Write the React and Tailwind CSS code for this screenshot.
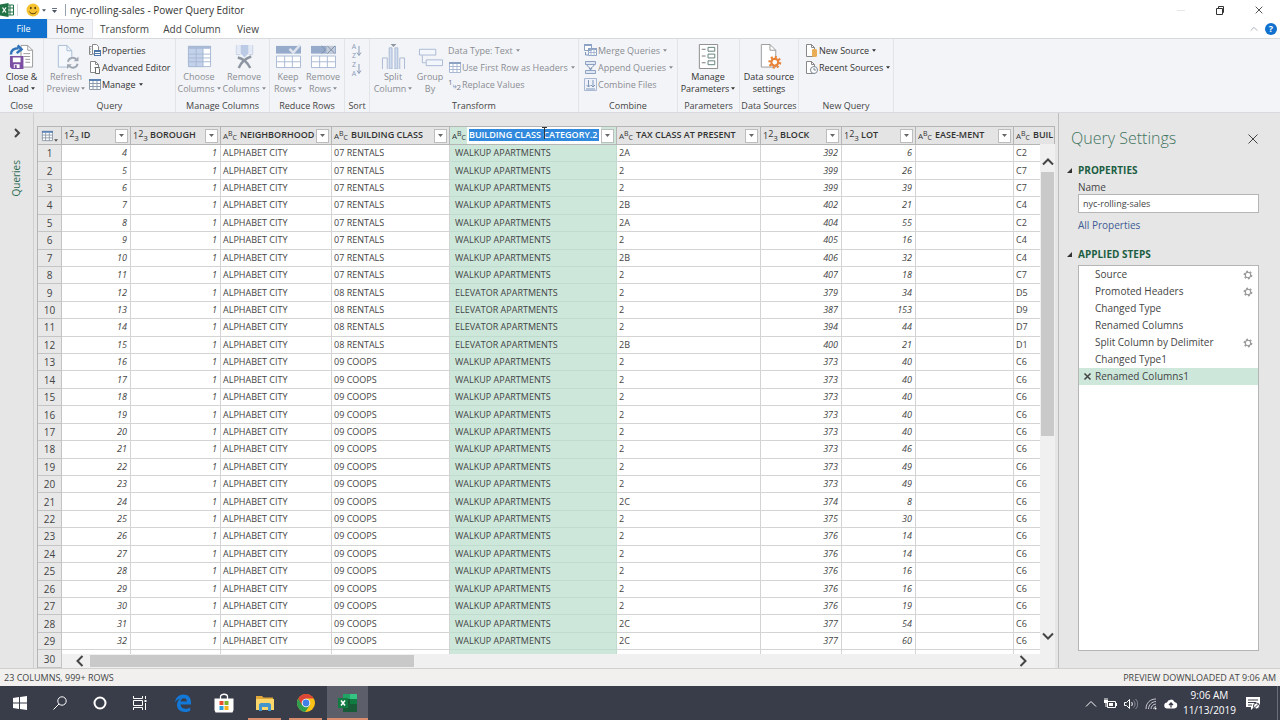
import { useState } from 'react';

const COLUMNS = [
  { name: 'ID', type: 'number', width: 'w-[69px]' },
  { name: 'BOROUGH', type: 'number', width: 'w-[90px]' },
  { name: 'NEIGHBORHOOD', type: 'text', width: 'w-[111px]' },
  { name: 'BUILDING CLASS', type: 'text', width: 'w-[118px]' },
  { name: 'BUILDING CLASS CATEGORY.2', type: 'text', width: 'w-[167px]', selected: true },
  { name: 'TAX CLASS AT PRESENT', type: 'text', width: 'w-[144px]' },
  { name: 'BLOCK', type: 'number', width: 'w-[81px]' },
  { name: 'LOT', type: 'number', width: 'w-[74px]' },
  { name: 'EASE-MENT', type: 'text', width: 'w-[98px]' },
  { name: 'BUIL', type: 'text', width: '', last: true },
];

// class, category, tax class, block, lot, building class at present
const SALES = [
  ['07 RENTALS', 'WALKUP APARTMENTS', '2A', 392, 6, 'C2'],
  ['07 RENTALS', 'WALKUP APARTMENTS', '2', 399, 26, 'C7'],
  ['07 RENTALS', 'WALKUP APARTMENTS', '2', 399, 39, 'C7'],
  ['07 RENTALS', 'WALKUP APARTMENTS', '2B', 402, 21, 'C4'],
  ['07 RENTALS', 'WALKUP APARTMENTS', '2A', 404, 55, 'C2'],
  ['07 RENTALS', 'WALKUP APARTMENTS', '2', 405, 16, 'C4'],
  ['07 RENTALS', 'WALKUP APARTMENTS', '2B', 406, 32, 'C4'],
  ['07 RENTALS', 'WALKUP APARTMENTS', '2', 407, 18, 'C7'],
  ['08 RENTALS', 'ELEVATOR APARTMENTS', '2', 379, 34, 'D5'],
  ['08 RENTALS', 'ELEVATOR APARTMENTS', '2', 387, 153, 'D9'],
  ['08 RENTALS', 'ELEVATOR APARTMENTS', '2', 394, 44, 'D7'],
  ['08 RENTALS', 'ELEVATOR APARTMENTS', '2B', 400, 21, 'D1'],
  ['09 COOPS', 'WALKUP APARTMENTS', '2', 373, 40, 'C6'],
  ['09 COOPS', 'WALKUP APARTMENTS', '2', 373, 40, 'C6'],
  ['09 COOPS', 'WALKUP APARTMENTS', '2', 373, 40, 'C6'],
  ['09 COOPS', 'WALKUP APARTMENTS', '2', 373, 40, 'C6'],
  ['09 COOPS', 'WALKUP APARTMENTS', '2', 373, 40, 'C6'],
  ['09 COOPS', 'WALKUP APARTMENTS', '2', 373, 46, 'C6'],
  ['09 COOPS', 'WALKUP APARTMENTS', '2', 373, 49, 'C6'],
  ['09 COOPS', 'WALKUP APARTMENTS', '2', 373, 49, 'C6'],
  ['09 COOPS', 'WALKUP APARTMENTS', '2C', 374, 8, 'C6'],
  ['09 COOPS', 'WALKUP APARTMENTS', '2', 375, 30, 'C6'],
  ['09 COOPS', 'WALKUP APARTMENTS', '2', 376, 14, 'C6'],
  ['09 COOPS', 'WALKUP APARTMENTS', '2', 376, 14, 'C6'],
  ['09 COOPS', 'WALKUP APARTMENTS', '2', 376, 16, 'C6'],
  ['09 COOPS', 'WALKUP APARTMENTS', '2', 376, 16, 'C6'],
  ['09 COOPS', 'WALKUP APARTMENTS', '2', 376, 19, 'C6'],
  ['09 COOPS', 'WALKUP APARTMENTS', '2C', 377, 54, 'C6'],
  ['09 COOPS', 'WALKUP APARTMENTS', '2C', 377, 60, 'C6'],
];

const ROWS = SALES.map(([cls, category, tax, block, lot, present], i) => [
  i + 4, 1, 'ALPHABET CITY', cls, category, tax, block, lot, '', present,
]);

const STEPS = [
  { name: 'Source', gear: true },
  { name: 'Promoted Headers', gear: true },
  { name: 'Changed Type' },
  { name: 'Renamed Columns' },
  { name: 'Split Column by Delimiter', gear: true },
  { name: 'Changed Type1' },
  { name: 'Renamed Columns1' },
];

/* ---------- icons ---------- */

function Caret({ size = 'h-[3px] w-1', className = '' }) {
  return (
    <svg viewBox="0 0 5 3" className={`inline-block shrink-0 ${size} ${className}`} fill="currentColor">
      <path d="M0 0h5L2.500 3z" />
    </svg>
  );
}

function Icon({ className = 'h-[25px] w-[25px]', box = '0 0 26 26', children }) {
  return (
    <svg viewBox={box} className={`shrink-0 ${className}`} fill="none" aria-hidden="true">
      {children}
    </svg>
  );
}

const SMALL = 'h-[13px] w-[13px]';

function CloseLoadIcon() {
  return (
    <Icon>
      <path d="M12.500 1.500h7l5 5V24h-12z" fill="#fff" stroke="#9a9a9a" />
      <path d="M19.500 1.500v5h5M15 10h7M15 13h7M17 16h5M17 19h5" stroke="#9a9a9a" />
      <path d="M2 11C2 6.500 5 4.500 10 4.500M9 1.500l4 4-5 4" stroke="#2f72b8" strokeWidth="2.600" />
      <path d="M1 12.500h14V26H3l-2-2z" fill="#7b4fa3" />
      <path d="M4 14h8v5H4zM5 21h6v4H5z" fill="#fff" />
      <path d="M6 22h2v3H6z" fill="#7b4fa3" />
    </Icon>
  );
}

function RefreshIcon() {
  return (
    <Icon>
      <path d="M4.500 1.500h9l5 5.500v17h-14z" fill="#f4f7fb" stroke="#a9bdd6" />
      <path d="M13.500 1.500V7h5" stroke="#a9bdd6" />
      <circle cx="19.500" cy="19.500" r="6.500" fill="#f3f4f8" />
      <path d="M14.500 18.500a5 5 0 0 1 9-2M24.500 20.500a5 5 0 0 1-9 2" stroke="#a0a8b4" strokeWidth="2" />
      <path d="M25.500 13v5h-5zM13.500 26v-5h5z" fill="#a0a8b4" />
    </Icon>
  );
}

function ChooseColumnsIcon() {
  return (
    <Icon>
      <path d="M1 2h24v22H1z" fill="#fff" />
      <path d="M1 2h16v22H1z" fill="#c3d2ea" />
      <path d="M1 2h24v3H1z" fill="#a9bad6" />
      <path d="M1.500 2.500h23v21h-23zM9.500 5v19M16.500 5v19M1 10.500h24M1 14.500h24M1 18.500h24" stroke="#a9b9d4" />
    </Icon>
  );
}

function RemoveColumnsIcon() {
  return (
    <Icon>
      <path d="M4.500 1v10h4M21.500 1v10h-4" stroke="#c3cfe2" />
      <path d="M5 1h4v9H5zM17 1h4v9h-4z" fill="#e3eaf5" />
      <path d="M9 1h8v9l-4 4-4-4z" fill="#bccbe5" />
      <path d="M6 14c5 1 10 5 13 11M20 13C14 15 9 20 7 25" stroke="#8d95a1" strokeWidth="2.500" />
    </Icon>
  );
}

function RowsIcon({ remove }) {
  return (
    <Icon>
      <path d="M0 2h26v8H0z" fill="#96abcb" />
      <path d="M.500 12.500h25v12H.500z" fill="#fff" stroke="#a9b9d4" />
      <path d="M9 12.500v12M17 12.500v12M.500 18.500h25" stroke="#a9b9d4" />
      {remove ? (
        <g>
          <path d="M16 2h9v8h-9z" fill="#c2cbd9" />
          <path d="M17 2l8 8M25 2l-8 8M11 2l4 4-4 4" stroke="#7f8ea6" />
        </g>
      ) : (
        <path d="M14 5l4 4 7-8" stroke="#dfe4ec" strokeWidth="2.500" />
      )}
    </Icon>
  );
}

// two stacked letters with a down arrow
function SortButton({ top, bottom, label }) {
  return (
    <button type="button" aria-label={label} className="flex h-[18px] items-center text-[#8b9bb5]">
      <span className="flex flex-col text-[7px] leading-[9px]">
        <span>{top}</span>
        <span>{bottom}</span>
      </span>
      <Icon box="0 0 6 12" className="h-3 w-[6px]">
        <path d="M3 1v9M1 7.500l2 3 2-3" stroke="currentColor" />
      </Icon>
    </button>
  );
}

function SplitColumnIcon() {
  return (
    <Icon>
      <path d="M1.500 26V14.500h5V26M19.500 26V14.500h5V26" stroke="#a9b9d4" />
      <path d="M8.500 4v22h3V4zM14.500 4v22h3V4z" fill="#d2def0" stroke="#a9b9d4" />
      <path d="M10 0h6l-3 3z" fill="#8d95a1" />
    </Icon>
  );
}

function GroupByIcon() {
  return (
    <Icon>
      <path d="M1.500 5.500h17v6h-17zM8.500 16.500h17v6h-17z" fill="#f3f6fa" stroke="#a9b9d4" />
      <path d="M4.500 12v7.500H8" stroke="#a9b9d4" />
    </Icon>
  );
}

function ParametersIcon() {
  return (
    <Icon>
      <path d="M3.500.500h19v25h-19z" fill="#fff" stroke="#8b8b8b" />
      <path d="M12.500 3.500h7v4h-7zM12.500 10.500h7v4h-7zM12.500 17.500h7v4h-7z" stroke="#5f7f78" />
      <path d="M6 5.500h4M6 12.500h4M6 19.500h4" stroke="#777" />
    </Icon>
  );
}

function Gear({ cx, cy, r, color, hole, dash, width }) {
  return (
    <g>
      <circle cx={cx} cy={cy} r={r} stroke={color} strokeWidth={width} />
      <circle cx={cx} cy={cy} r={r + width * 0.8} stroke={color} strokeWidth={width} strokeDasharray={dash} pathLength="24" />
      <circle cx={cx} cy={cy} r={r - width / 2} fill={hole} />
    </g>
  );
}

function DataSourceIcon() {
  return (
    <Icon>
      <path d="M4.500.500h9l6 6V24h-15z" fill="#fff" stroke="#9a9a9a" />
      <path d="M13.500.500v6h6" stroke="#9a9a9a" />
      <Gear cx={18.500} cy={19} r={3.5} width={2.5} color="#e8833a" hole="#fff" dash="1.500 1.500" />
    </Icon>
  );
}

function PropertiesIcon() {
  return (
    <Icon box="0 0 13 13" className={SMALL}>
      <path d="M1.500 2.500v8h3M1.500 2.500h2M4.500.500h4l2 2V10h-6z" fill="#fff" stroke="#888" />
      <path d="M2 5h1M2 8h1" stroke="#888" />
      <path d="M6 6h7v6H6z" fill="#4f76a8" />
      <path d="M7 8.500h5M7 10.500h5" stroke="#fff" />
    </Icon>
  );
}

function AdvancedEditorIcon() {
  return (
    <Icon box="0 0 13 13" className={SMALL}>
      <path d="M2.500.500h5l3 3v8h-8z" fill="#fff" stroke="#888" />
      <path d="M7.500.500v3h3" stroke="#888" />
      <path d="M6.500 6.500h5v1M7.500 7v5.500h4V8" fill="#fff" stroke="#6b6b6b" />
    </Icon>
  );
}

function TableIcon({ className = SMALL, line = '#8e9bab', head = '#5b82b5' }) {
  return (
    <Icon box="0 0 13 13" className={className}>
      <path d="M1.500 1.500h11v10h-11z" fill="#fff" stroke={line} />
      <path d="M1 5.500h12M1 8.500h12M5 3v9M9 3v9" stroke={line} />
      <path d="M1 1h12v2H1z" fill={head} />
    </Icon>
  );
}

function ReplaceIcon() {
  return (
    <span aria-hidden="true" className="flex h-[13px] w-[13px] shrink-0 items-start text-[8px] leading-[8px] text-[#737c8c]">
      <span>1</span>
      <Icon box="0 0 5 8" className="mt-1 h-2 w-[4px]">
        <path d="M0 2v3h4M2.500 3l1.500 2-1.500 2" stroke="#7f96bb" />
      </Icon>
      <span className="mt-[5px]">2</span>
    </span>
  );
}

function MergeIcon() {
  return (
    <Icon box="0 0 13 13" className={SMALL}>
      <path d="M.500.500h7v6h-7zM4.500 4.500h8v7h-8z" fill="#fff" stroke="#8ea3c4" />
      <path d="M0 0h8v2H0zM4 4h9v2H4z" fill="#8ea3c4" />
      <path d="M4 8.500h9M7 5v7M10 5v7" stroke="#a9b9d4" />
      <path d="M1.500 8v3H4" stroke="#7f96bb" />
    </Icon>
  );
}

function AppendIcon() {
  return (
    <Icon box="0 0 13 13" className={SMALL}>
      <path d="M1.500.500h10v3h-10zM1.500 9.500h10v3h-10z" fill="#dfe7f3" stroke="#8ea3c4" />
      <path d="M3 4c0 2 3 1.500 3.500 4.500C7 5.500 10 6 10 4M5 7l1.500 2L8 7" stroke="#7f96bb" />
    </Icon>
  );
}

function CombineIcon() {
  return (
    <Icon box="0 0 13 13" className={SMALL}>
      <path d="M.500.500h12v12H.500z" fill="#eef2f8" stroke="#a9b9d4" />
      <path d="M4.500 2v7M2.500 7l2 2 2-2M9 2v7M7 7l2 2 2-2M2 11h9" stroke="#7f96bb" />
    </Icon>
  );
}

function SourceIcon({ recent }) {
  return (
    <Icon box="0 0 13 13" className={SMALL}>
      <path d="M1.500.500h5l3 3v9h-8z" fill="#fff" stroke="#888" />
      <path d="M6.500.500v3h3" stroke="#888" />
      {recent ? (
        <g>
          <circle cx="9" cy="9" r="3.500" fill="#fff" stroke="#7a8794" />
          <path d="M9 7v2h2" stroke="#7a8794" />
        </g>
      ) : (
        <path d="M7 6c0-1.300 5-1.300 5 0v6c0 1.300-5 1.300-5 0z" fill="#e9ae55" />
      )}
    </Icon>
  );
}

function TypeIcon({ type }) {
  const [a, b, c] = type === 'number' ? ['1', '2', '3'] : ['A', 'B', 'C'];
  const size = type === 'number' ? 'text-[9px]' : 'text-[8px]';
  return (
    <span aria-hidden="true" className={`flex h-[15px] w-[14px] shrink-0 items-start leading-[9px] font-normal text-[#333] ${size}`}>
      <span className="mt-[3px]">{a}</span>
      <span className={type === 'number' ? 'mt-px' : 'mt-px text-[7px]'}>{b}</span>
      <span className={type === 'number' ? 'mt-[5px] text-[8px]' : 'mt-[5px] text-[7px]'}>{c}</span>
    </span>
  );
}

function Chevron({ d, className = 'h-3 w-3', width = 2 }) {
  return (
    <Icon box="0 0 12 12" className={className}>
      <path d={d} stroke="currentColor" strokeWidth={width} />
    </Icon>
  );
}

/* ---------- ribbon ---------- */

function BigButton({ icon, top, bottom, caret, disabled, className }) {
  return (
    <button
      type="button"
      className={`flex shrink-0 flex-col items-center pt-[2px] ${className} ${disabled ? 'text-[#8a8d93]' : 'text-[#333]'}`}
    >
      {icon}
      <span className="mt-[2px] leading-[12px] whitespace-nowrap">{top}</span>
      <span className="flex items-center gap-[2px] leading-[11px] whitespace-nowrap">
        {bottom}
        {caret && <Caret />}
      </span>
    </button>
  );
}

function SmallButton({ icon, label, caret, disabled }) {
  return (
    <button
      type="button"
      className={`flex h-[17px] items-center gap-px whitespace-nowrap ${disabled ? 'text-[#8a8d93]' : 'text-[#333]'}`}
    >
      {icon}
      <span>{label}</span>
      {caret && <Caret className="ml-[2px]" />}
    </button>
  );
}

function Group({ label, className, children }) {
  return (
    <section className={`flex shrink-0 flex-col border-r border-[#e2e4e8] ${className}`}>
      <div className="flex flex-1 pt-[3px]">{children}</div>
      <h2 className="text-center leading-[12px] whitespace-nowrap text-[#444]">{label}</h2>
    </section>
  );
}

function Ribbon() {
  return (
    <div className="flex h-[75px] shrink-0 border-y border-[#d9dadd] bg-[#f3f4f8] text-[9px]">
      <Group label="Close" className="w-[44px]">
        <BigButton icon={<CloseLoadIcon />} top="Close &" bottom="Load" caret className="w-[43px]" />
      </Group>
      <Group label="Query" className="w-[132px]">
        <BigButton icon={<RefreshIcon />} top="Refresh" bottom="Preview" caret disabled className="w-[44px]" />
        <div className="flex flex-col">
          <SmallButton icon={<PropertiesIcon />} label="Properties" />
          <SmallButton icon={<AdvancedEditorIcon />} label="Advanced Editor" />
          <SmallButton icon={<TableIcon />} label="Manage" caret />
        </div>
      </Group>
      <Group label="Manage Columns" className="w-[94px]">
        <BigButton icon={<ChooseColumnsIcon />} top="Choose" bottom="Columns" caret disabled className="w-[46px]" />
        <BigButton icon={<RemoveColumnsIcon />} top="Remove" bottom="Columns" caret disabled className="w-[44px]" />
      </Group>
      <Group label="Reduce Rows" className="w-[75px]">
        <BigButton icon={<RowsIcon />} top="Keep" bottom="Rows" caret disabled className="w-[36px]" />
        <BigButton icon={<RowsIcon remove />} top="Remove" bottom="Rows" caret disabled className="w-[34px]" />
      </Group>
      <Group label="Sort" className="w-[25px]">
        <div className="flex w-full flex-col items-center">
          <SortButton top="A" bottom="Z" label="Sort ascending" />
          <SortButton top="Z" bottom="A" label="Sort descending" />
        </div>
      </Group>
      <Group label="Transform" className="w-[209px]">
        <BigButton icon={<SplitColumnIcon />} top="Split" bottom="Column" caret disabled className="w-[46px]" />
        <BigButton icon={<GroupByIcon />} top="Group" bottom="By" disabled className="w-[28px]" />
        <div className="flex flex-col pl-1">
          <SmallButton label="Data Type: Text" caret disabled />
          <SmallButton icon={<TableIcon line="#a9b9d4" head="#8ea3c4" />} label="Use First Row as Headers" caret disabled />
          <SmallButton icon={<ReplaceIcon />} label="Replace Values" disabled />
        </div>
      </Group>
      <Group label="Combine" className="w-[99px]">
        <div className="flex flex-col pl-[5px]">
          <SmallButton icon={<MergeIcon />} label="Merge Queries" caret disabled />
          <SmallButton icon={<AppendIcon />} label="Append Queries" caret disabled />
          <SmallButton icon={<CombineIcon />} label="Combine Files" disabled />
        </div>
      </Group>
      <Group label="Parameters" className="w-[62px]">
        <BigButton icon={<ParametersIcon />} top="Manage" bottom="Parameters" caret className="w-[60px]" />
      </Group>
      <Group label="Data Sources" className="w-[59px]">
        <BigButton icon={<DataSourceIcon />} top="Data source" bottom="settings" className="w-[58px]" />
      </Group>
      <Group label="New Query" className="w-[95px]">
        <div className="flex flex-col pl-[6px]">
          <SmallButton icon={<SourceIcon />} label="New Source" caret />
          <SmallButton icon={<SourceIcon recent />} label="Recent Sources" caret />
        </div>
      </Group>
    </div>
  );
}

/* ---------- window chrome ---------- */

function ExcelLogo() {
  return (
    <Icon box="0 0 14 14" className="h-[14px] w-[14px]">
      <path d="M7 2h6.500v10H7z" fill="#fff" stroke="#217346" />
      <path d="M10 2v10M8 5h5M8 9h5" stroke="#217346" />
      <path d="M0 1.500L8.500 0v14L0 12.500z" fill="#217346" />
      <path d="M2.500 4.500l3.500 5M6 4.500l-3.500 5" stroke="#fff" strokeWidth="1.300" />
    </Icon>
  );
}

function TitleBar() {
  return (
    <header className="flex h-[19px] shrink-0 items-center bg-white pt-px text-[10px] text-[#333]">
      <ExcelLogo />
      <span className="ml-[3px] h-3 w-px bg-gray-300" />
      <button type="button" aria-label="Feedback" className="ml-2 flex items-center gap-[2px]">
        <Icon box="0 0 14 14" className="h-[14px] w-[14px]">
          <circle cx="7" cy="7" r="6.500" fill="#f7c331" />
          <ellipse cx="4.800" cy="5" rx=".900" ry="1.300" fill="#5b4012" />
          <ellipse cx="9.200" cy="5" rx=".900" ry="1.300" fill="#5b4012" />
          <path d="M3.300 8.500c1.500 3 5.900 3 7.400 0" stroke="#5b4012" />
        </Icon>
        <Caret className="text-gray-600" />
      </button>
      <button type="button" aria-label="Customize toolbar" className="ml-1 flex flex-col items-center gap-px p-[2px] text-gray-600">
        <span className="h-px w-[5px] bg-gray-500" />
        <Caret size="h-[3px] w-[5px]" />
      </button>
      <span className="ml-[6px] h-3 w-px bg-gray-400" />
      <h1 className="ml-1">nyc-rolling-sales - Power Query Editor</h1>
      <div className="ml-auto flex h-full items-center text-[#333]">
        <button type="button" aria-label="Minimize" className="flex w-10 justify-center">
          <span className="h-px w-2 bg-gray-200" />
        </button>
        <button type="button" aria-label="Restore" className="flex w-[38px] justify-center">
          <Icon box="0 0 10 10" className="h-[10px] w-[10px]">
            <path d="M1.500 3.500h6v6h-6zM3.500 3.500v-2h5v6h-1" stroke="currentColor" />
          </Icon>
        </button>
        <button type="button" aria-label="Close" className="mr-px flex w-10 justify-center">
          <Chevron d="M2 2l8 8M10 2l-8 8" className="h-[10px] w-[10px]" width={1} />
        </button>
      </div>
    </header>
  );
}

function Tabs() {
  return (
    <nav className="flex h-[19px] shrink-0 bg-white text-[10px] text-[#444]">
      <button type="button" className="w-[47px] bg-[#1071cf] pt-px text-[9px] text-white">File</button>
      <button type="button" className="w-[46px] border-x border-t border-[#e2e4e8] bg-[#f3f4f8] pt-px">Home</button>
      <button type="button" className="w-[63px] pt-px">Transform</button>
      <button type="button" className="w-[72px] pt-px whitespace-nowrap">Add Column</button>
      <button type="button" className="w-10 pt-px">View</button>
      <button type="button" aria-label="Collapse ribbon" className="ml-auto text-gray-400">
        <Chevron d="M2 8l4-4 4 4" className="h-[10px] w-[10px]" width={1} />
      </button>
      <button
        type="button"
        aria-label="Help"
        className="mt-1 mr-[3px] ml-[6px] h-3 w-3 rounded-full bg-[#1071cf] text-[9px] leading-3 font-bold text-white"
      >
        ?
      </button>
    </nav>
  );
}

/* ---------- grid ---------- */

function FilterButton({ column }) {
  return (
    <button
      type="button"
      aria-label={`Filter ${column}`}
      className="ml-auto flex h-[14px] w-[13px] shrink-0 items-center justify-center border border-[#bdbdbd] bg-white text-[#666]"
    >
      <Caret size="h-[3px] w-[5px]" />
    </button>
  );
}

function HeaderCell({ column }) {
  const [name, setName] = useState(column.name);

  return (
    <th
      className={`overflow-hidden border-r border-b border-[#b5b5b5] p-0 font-semibold text-[#333] ${
        column.selected ? 'bg-[#cde7db]' : 'bg-[#e4e4e4]'
      }`}
    >
      <div className="flex h-[17px] items-center pr-[2px] pl-[2px]">
        <TypeIcon type={column.type} />
        {column.selected ? (
          <div className="relative ml-px flex h-full flex-1 items-center bg-white pr-[2px] pb-[2px] pl-[2px]">
            <input
              aria-label="Column name"
              value={name}
              onChange={(e) => setName(e.target.value)}
              className="h-3 w-full min-w-0 bg-[#3089dc] font-semibold text-white outline-none"
            />
            <svg viewBox="0 0 5 12" className="absolute top-0 left-[75px] h-3 w-[5px]" fill="none" stroke="#333">
              <path d="M0 .500h5M2.500 0v12" />
            </svg>
          </div>
        ) : (
          <span className="ml-[3px] pb-[2px] whitespace-nowrap">{column.name}</span>
        )}
        {!column.last && <FilterButton column={column.name} />}
      </div>
    </th>
  );
}

function cellClass(column) {
  if (column.selected) return 'border-[#c0dccf] bg-[#cde7db] pl-[5px]';
  if (column.type === 'number') return 'border-[#d4d4d4] bg-white pr-[3px] text-right italic';
  return 'border-[#d4d4d4] bg-white pl-[2px]';
}

function DataGrid() {
  return (
    <div className="relative mt-[13px] min-w-0 flex-1 overflow-hidden">
      <table className="h-full w-full table-fixed border-separate border-spacing-0 border-t border-l border-[#b5b5b5] text-[9px] leading-[12px] text-[#444]">
        <colgroup>
          <col className="w-[24px]" />
          {COLUMNS.map((c) => (
            <col key={c.name} className={c.width} />
          ))}
        </colgroup>
        <thead>
          <tr className="h-[18px]">
            <th className="border-r border-b border-[#b5b5b5] bg-[#e4e4e4] p-0">
              <button type="button" aria-label="Table menu" className="flex w-full items-end justify-center gap-px text-[#555]">
                <TableIcon className="h-3 w-3" />
                <Caret />
              </button>
            </th>
            {COLUMNS.map((c) => (
              <HeaderCell key={c.name} column={c} />
            ))}
          </tr>
        </thead>
        <tbody>
          {[...ROWS, COLUMNS.map(() => '')].map((row, i) => (
            <tr key={i}>
              <th className="border-r border-b border-[#c4c4c4] bg-[#e8e8e8] p-0 text-[10px] font-normal">{i + 1}</th>
              {row.map((value, j) => (
                <td key={j} className={`overflow-hidden border-r border-b py-0 whitespace-nowrap ${cellClass(COLUMNS[j])}`}>
                  {value}
                </td>
              ))}
            </tr>
          ))}
        </tbody>
      </table>

      <div className="absolute top-[18px] right-0 bottom-[14px] flex w-[15px] flex-col items-center bg-[#f0f0f0] pb-3 text-[#444]">
        <button type="button" aria-label="Scroll up" className="flex h-7 items-center pt-2">
          <Chevron d="M1 8.500l5-5 5 5" />
        </button>
        <div className="h-[264px] w-[13px] bg-[#c9c9c9]" />
        <button type="button" aria-label="Scroll down" className="mt-auto">
          <Chevron d="M1 3.500l5 5 5-5" />
        </button>
      </div>
      <div className="absolute right-0 bottom-0 left-[25px] flex h-[14px] items-center bg-[#f0f0f0] pr-[26px] pl-3 text-[#444]">
        <button type="button" aria-label="Scroll left">
          <Chevron d="M8.500 1l-5 5 5 5" />
        </button>
        <div className="ml-1 h-3 w-[324px] bg-[#c9c9c9]" />
        <button type="button" aria-label="Scroll right" className="ml-auto">
          <Chevron d="M3.500 1l5 5-5 5" />
        </button>
      </div>
    </div>
  );
}

/* ---------- settings pane ---------- */

function SectionTitle({ children }) {
  return (
    <h3 className="flex items-center gap-[6px] text-[10px] leading-[14px] font-bold text-[#1c5e42]">
      <svg viewBox="0 0 5 5" className="h-[5px] w-[5px]" fill="#333">
        <path d="M5 0v5H0z" />
      </svg>
      {children}
    </h3>
  );
}

function QuerySettings() {
  const [queryName, setQueryName] = useState('nyc-rolling-sales');

  return (
    <aside className="flex w-[222px] shrink-0 flex-col border-l border-[#bdbdbd] bg-[#e6e6e6] pt-[14px] pr-[21px] pb-[17px] pl-2 text-[10px] text-[#444]">
      <div className="flex items-center justify-between pl-1">
        <h2 className="text-[16px] leading-[22px] font-light text-[#3f7460]">Query Settings</h2>
        <button type="button" aria-label="Close settings" className="pt-[2px]">
          <Chevron d="M1.500 1.500l9 9M10.500 1.500l-9 9" width={1} />
        </button>
      </div>

      <div className="mt-[14px]">
        <SectionTitle>PROPERTIES</SectionTitle>
        <div className="mt-[3px] flex flex-col items-start pl-[11px]">
          <label htmlFor="queryName" className="leading-[14px]">Name</label>
          <input
            id="queryName"
            value={queryName}
            onChange={(e) => setQueryName(e.target.value)}
            className="h-[19px] w-full border border-[#b5b5b5] bg-white px-1 text-[9px] outline-none"
          />
          <a href="#properties" className="mt-[5px] leading-[14px] text-[#3d5c94]">All Properties</a>
        </div>
      </div>

      <div className="mt-[15px] flex min-h-0 flex-1 flex-col">
        <SectionTitle>APPLIED STEPS</SectionTitle>
        <ul className="mt-1 ml-[11px] flex-1 border border-[#b5b5b5] bg-white">
          {STEPS.map((step, i) => {
            const active = i === STEPS.length - 1;
            return (
              <li
                key={step.name}
                className={`flex items-center pr-[5px] pl-1 leading-[17px] ${active ? 'bg-[#cde7db]' : ''}`}
              >
                <span className="flex w-3 shrink-0">
                  {active && (
                    <button type="button" aria-label="Delete step">
                      <Chevron d="M2 2l8 8M10 2l-8 8" className="h-[9px] w-[9px]" />
                    </button>
                  )}
                </span>
                {step.name}
                {step.gear && (
                  <button type="button" aria-label={`Edit ${step.name}`} className="ml-auto">
                    <Icon box="0 0 10 10" className="h-[10px] w-[10px]">
                      <Gear cx={5} cy={5} r={2.6} width={1.4} color="#9c9c9c" hole="#fff" dash="2 2" />
                    </Icon>
                  </button>
                )}
              </li>
            );
          })}
        </ul>
      </div>
    </aside>
  );
}

/* ---------- taskbar ---------- */

function TaskButton({ label, running, active, wide, children }) {
  return (
    <button
      type="button"
      aria-label={label}
      className={`flex h-full shrink-0 flex-col items-center ${wide ? 'w-[41px]' : 'w-10'} ${active ? 'bg-[#5c5f69]' : ''}`}
    >
      <span className="flex flex-1 items-center pt-px">{children}</span>
      <span className={`h-[2px] ${active ? 'w-full' : 'w-[33px]'} ${running ? 'bg-[#d98d6c]' : ''}`} />
    </button>
  );
}

const TASK = 'h-5 w-5';

function Taskbar() {
  return (
    <footer className="flex h-[34px] shrink-0 items-center bg-[#393c49] text-white">
      <TaskButton label="Start">
        <Icon box="0 0 14 14" className="h-[14px] w-[14px]">
          <path d="M0 2l6-1v5.500H0zM7 .900L14 0v6.500H7zM0 7.500h6V13l-6-1zM7 7.500h7V14l-7-1z" fill="#fff" />
        </Icon>
      </TaskButton>
      <TaskButton label="Search">
        <Icon box="0 0 14 14" className="h-[14px] w-[14px]">
          <circle cx="9" cy="5" r="4.200" stroke="#fff" />
          <path d="M6 8l-5.500 5.500" stroke="#fff" />
        </Icon>
      </TaskButton>
      <TaskButton label="Cortana">
        <Icon box="0 0 14 14" className="h-[14px] w-[14px]">
          <circle cx="7" cy="7" r="5.500" stroke="#fff" strokeWidth="2" />
        </Icon>
      </TaskButton>
      <TaskButton label="Task view">
        <Icon box="0 0 14 14" className="h-[14px] w-[14px]">
          <path d="M.500 0v2.500h9V0M.500 4.500h9v5h-9zM.500 14v-2.500h9V14M12.500 0v3M12.500 7v7" stroke="#fff" />
          <path d="M11.500 4h2v2h-2z" fill="#fff" />
        </Icon>
      </TaskButton>
      <span className="w-[2px]" />
      <TaskButton label="Edge" wide>
        <Icon box="0 0 20 20" className={TASK}>
          <path
            d="M2 9.500C2.500 4.500 6 1.500 10.500 1.500c5 0 7.500 3.500 7.500 8v2H7.500c.2 3 2.500 4.300 5 4.300 1.900 0 3.500-.5 4.700-1.300v3.300c-1.400.8-3.300 1.200-5.200 1.200-5 0-8-3-8-7 0-3 1.500-5.300 4-6.500C5.500 5.800 3.500 7 2 9.500zM7.600 8.500h6.200c0-2-1-3.200-3-3.200-1.800 0-3 1.400-3.200 3.200z"
            fill="#1379d8"
          />
        </Icon>
      </TaskButton>
      <TaskButton label="Store" wide>
        <Icon box="0 0 20 20" className={TASK}>
          <path d="M6.500 6V3.500c0-3 7-3 7 0V6" stroke="#fff" strokeWidth="1.300" />
          <path d="M0.500 5.500h19V17l-1 2.500h-17l-1-2.500z" fill="#fff" />
          <path d="M5.500 8h4v4h-4z" fill="#e8502f" />
          <path d="M10.500 8h4v4h-4z" fill="#7cb52c" />
          <path d="M5.500 13h4v4h-4z" fill="#2aa0dd" />
          <path d="M10.500 13h4v4h-4z" fill="#f4b41a" />
        </Icon>
      </TaskButton>
      <TaskButton label="File Explorer" running wide>
        <Icon box="0 0 20 20" className={TASK}>
          <path d="M1 3h6l1.500 1.500H18V17H1z" fill="#e2a93a" />
          <path d="M1 6h18v11H1z" fill="#fbd66b" />
          <path d="M4 18v-6.500L5.500 10h9l1.500 1.500V18h-3v-4H7v4z" fill="#4393cd" />
        </Icon>
      </TaskButton>
      <TaskButton label="Chrome" running wide>
        <Icon box="0 0 20 20" className={TASK}>
          <circle cx="10" cy="10" r="9" fill="#fbc116" />
          <path d="M10 10L2.200 5.500A9 9 0 0 0 9 18.950L13.900 12.200z" fill="#2f9e4f" />
          <path d="M2.200 5.500A9 9 0 0 1 17.800 5.500H10L6.100 12.200z" fill="#dd4636" />
          <circle cx="10" cy="10" r="4.300" fill="#fff" />
          <circle cx="10" cy="10" r="3.400" fill="#4380e6" />
        </Icon>
      </TaskButton>
      <span className="w-px" />
      <TaskButton label="Excel" running active wide>
        <Icon box="0 0 20 20" className={TASK}>
          <path d="M5 1h14v18H5z" fill="#21a366" />
          <path d="M12 1h7v5h-7z" fill="#33c481" />
          <path d="M5 6h7v5H5zM5 11h14v8H5z" fill="#185c37" />
          <path d="M12 6h7v5h-7z" fill="#107c41" />
          <path d="M0 5h10v10H0z" fill="#107c41" />
          <path d="M3 7.500l4 5M7 7.500l-4 5" stroke="#fff" strokeWidth="1.500" />
        </Icon>
      </TaskButton>

      <div className="ml-auto flex h-full items-center gap-[5px]">
        <div className="flex items-center gap-[7px] pt-px">
          <button type="button" aria-label="Hidden icons">
            <Chevron d="M1 8.500l5-5 5 5" width={1} />
          </button>
          <Icon box="0 0 13 12" className="h-3 w-[13px]">
            <path d="M3.500 3.500h8v6h-8z" stroke="#fff" />
            <path d="M5 5h4v3H5zM12 5h1v3h-1zM0 2h4v3H0z" fill="#fff" />
            <path d="M1 0v2M3 0v2M2 5v4" stroke="#fff" />
          </Icon>
          <Icon box="0 0 14 12" className="h-3 w-[14px]">
            <path d="M.500 4.500h2l3-3v9l-3-3h-2z" stroke="#fff" />
            <path d="M7.500 4c1 1 1 3 0 4" stroke="#fff" />
            <path d="M9.500 2.500c2 2 2 5 0 7M11.500 1c3 3 3 7 0 10" stroke="#8d909a" />
          </Icon>
          <Icon box="0 0 12 12" className="h-3 w-3">
            <path d="M1 11C1 5 5 1 11 1M3.500 11C3.500 7 7 3.500 11 3.500M6 11c0-2.500 2-5 5-5M8.500 11c0-1 1-2.500 2.500-2.500" stroke="#c9cbd1" />
            <circle cx="10.500" cy="10.500" r="1" fill="#fff" />
          </Icon>
          <Icon box="0 0 14 12" className="h-3 w-[14px]">
            <path d="M3.500 10.500a3 3 0 0 1-.500-6 4 4 0 0 1 7.500-.500 3.300 3.300 0 0 1 0 6.500z" fill="#fff" />
            <path d="M7 9.500V5M5 7l2-2 2 2" stroke="#393c49" strokeWidth="1.300" />
          </Icon>
        </div>
        <div className="flex flex-col items-center text-[10px] leading-[15px]">
          <span>9:06 AM</span>
          <span>11/13/2019</span>
        </div>
        <button type="button" aria-label="Notifications" className="ml-[5px]">
          <Icon box="0 0 14 14" className="h-[14px] w-[14px]">
            <path d="M0 1h14v10H8l-3 3v-3H0z" fill="#fff" />
            <path d="M2 4h10M2 6.500h8M2 9h4" stroke="#393c49" />
            <circle cx="10.500" cy="10" r="3" fill="#fff" stroke="#393c49" />
            <path d="M8.500 12l4-4" stroke="#393c49" />
          </Icon>
        </button>
        <span className="mr-[2px] ml-3 h-full w-px bg-[#6b6e79]" />
      </div>
    </footer>
  );
}

export default function App() {
  return (
    <div className="flex h-screen flex-col overflow-hidden bg-[#e6e6e6] font-['Open_Sans','Noto_Sans',sans-serif]">
      <TitleBar />
      <Tabs />
      <Ribbon />
      <main className="flex min-h-0 flex-1">
        <div className="flex w-[34px] shrink-0 flex-col items-center border-r border-[#cfcfcf] pt-[14px]">
          <button type="button" aria-label="Expand queries" className="text-[#444]">
            <Chevron d="M4 2l4 4-4 4" />
          </button>
          <span className="mt-[21px] rotate-180 text-[10px] text-[#2c6b53] [writing-mode:vertical-rl]">Queries</span>
        </div>
        <div className="flex min-w-0 flex-1 pr-[3px] pl-[3px]">
          <DataGrid />
        </div>
        <QuerySettings />
      </main>
      <div className="flex h-[18px] shrink-0 items-center justify-between border-t border-[#d0d0d0] bg-[#f1f0ef] px-1 pt-px text-[9px] text-[#444]">
        <span>23 COLUMNS, 999+ ROWS</span>
        <span>PREVIEW DOWNLOADED AT 9:06 AM</span>
      </div>
      <Taskbar />
    </div>
  );
}
